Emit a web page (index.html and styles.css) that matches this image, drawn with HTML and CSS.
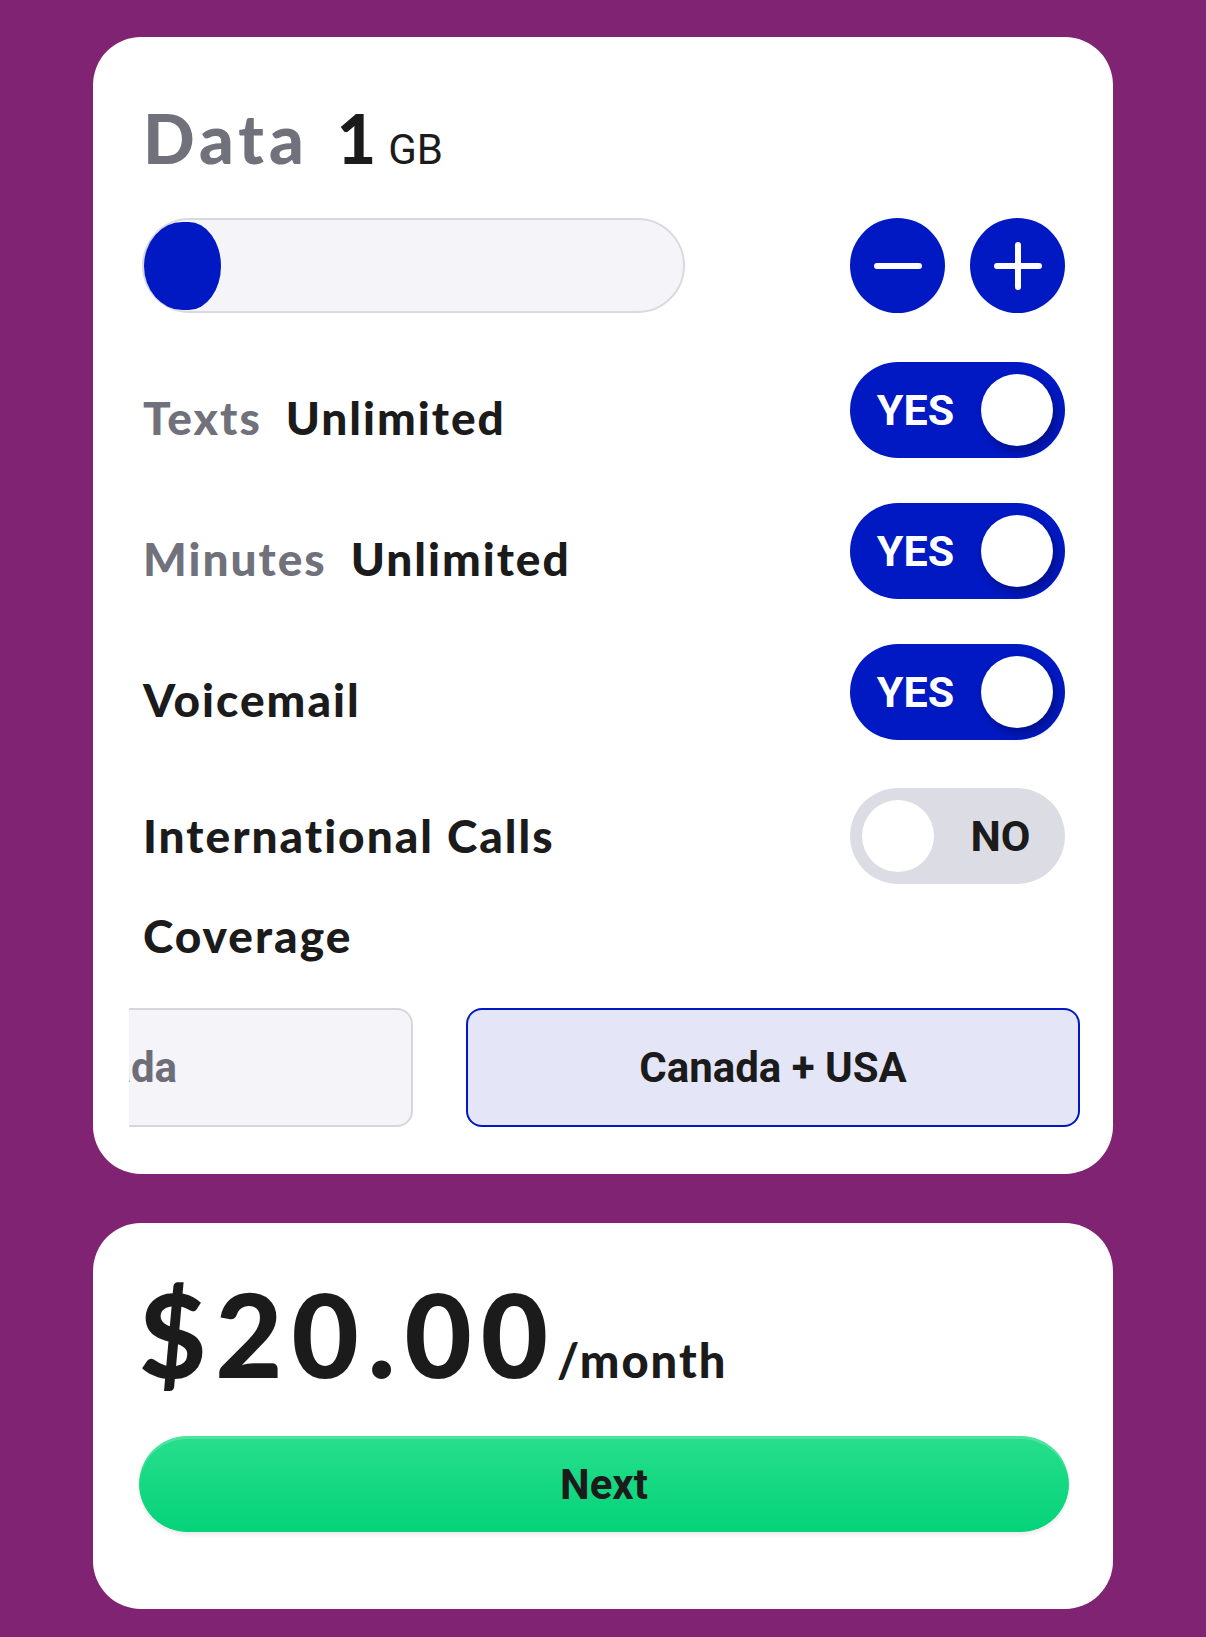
FILE: index.html
```html
<!DOCTYPE html>
<html lang="en">
<head>
    <meta charset="UTF-8">
    <meta name="viewport" content="width=device-width, initial-scale=1.0">
    <title>Build Your Plan</title>
    <link rel="stylesheet" href="styles.css">
</head>
<body>
    <div class="page">
        <section class="card plan-card">
            <h2 class="data-head"><span class="data-label">Data</span><span class="data-value">1</span><span class="data-unit">GB</span></h2>

            <div class="data-row">
                <div class="slider"><div class="slider-thumb"></div></div>
                <div class="stepper">
                    <button class="step-btn" aria-label="Less data">
                        <svg viewBox="0 0 48 48"><path d="M3 24h42"/></svg>
                    </button>
                    <button class="step-btn" aria-label="More data">
                        <svg viewBox="0 0 48 48"><path d="M3 24h42M24 3v42"/></svg>
                    </button>
                </div>
            </div>

            <div class="option-row">
                <div class="option-label"><span class="muted">Texts</span><span class="option-value">Unlimited</span></div>
                <div class="toggle on"><span class="toggle-text">YES</span><span class="toggle-knob"></span></div>
            </div>
            <div class="option-row">
                <div class="option-label"><span class="muted">Minutes</span><span class="option-value">Unlimited</span></div>
                <div class="toggle on"><span class="toggle-text">YES</span><span class="toggle-knob"></span></div>
            </div>
            <div class="option-row">
                <div class="option-label">Voicemail</div>
                <div class="toggle on"><span class="toggle-text">YES</span><span class="toggle-knob"></span></div>
            </div>
            <div class="option-row intl-row">
                <div class="option-label">International Calls</div>
                <div class="toggle off"><span class="toggle-knob"></span><span class="toggle-text">NO</span></div>
            </div>

            <h3 class="section-title">Coverage</h3>
            <div class="coverage">
                <div class="coverage-track">
                    <button class="coverage-opt">Canada</button>
                    <button class="coverage-opt selected">Canada + USA</button>
                </div>
            </div>
        </section>

        <section class="card price-card">
            <div class="price"><span class="price-amount">$20.00</span><span class="price-period">/month</span></div>
            <button class="next-btn">Next</button>
        </section>
    </div>
</body>
</html>
```

FILE: styles.css
```css
body {
    margin: 0;
    background: #7f2372;
    font-family: "Lato", "Noto Sans", sans-serif;
    color: #1b1b1b;
}
.page {
    padding: 37px 0 28px;
}
.card {
    width: 1020px;
    margin: 0 auto;
    background: #fff;
    border-radius: 48px;
    box-sizing: border-box;
}
.plan-card {
    padding: 67px 48px 47px 50px;
}
.price-card {
    margin-top: 49px;
    padding: 53px 44px 77px 46px;
}

/* Data */
.data-head {
    margin: 0;
    font-size: 68px;
    font-weight: 900;
    line-height: 1;
}
.data-label {
    color: #71717c;
    letter-spacing: 5px;
}
.data-value {
    margin-left: 28px;
}
.data-unit {
    margin-left: 12px;
    font-family: Roboto, sans-serif;
    font-weight: 400;
    font-size: 42px;
}
.data-row {
    margin-top: 46px;
    display: flex;
    justify-content: space-between;
    align-items: center;
}
.slider {
    margin-left: -1px;
    width: 543px;
    height: 95px;
    box-sizing: border-box;
    border: 2px solid #d9d9e1;
    border-radius: 48px;
    background: #f4f4f9;
    display: flex;
    align-items: center;
}
.slider-thumb {
    width: 77px;
    height: 88px;
    background: #0019c2;
    border-radius: 50% 42% 42% 50% / 50%;
}
.stepper {
    display: flex;
    gap: 25px;
}
.step-btn {
    width: 95px;
    height: 95px;
    border: none;
    border-radius: 50%;
    background: #0019c2;
    padding: 0;
    display: flex;
    justify-content: center;
    align-items: center;
    cursor: pointer;
}
.step-btn svg {
    width: 48px;
    height: 48px;
    stroke: #fff;
    stroke-width: 6;
    stroke-linecap: round;
    fill: none;
}

/* Options */
.option-row {
    margin-top: 45px;
    display: flex;
    justify-content: space-between;
    align-items: center;
}
.data-row + .option-row {
    margin-top: 49px;
}
.option-label {
    padding-top: 16px;
    font-size: 46px;
    font-weight: 900;
    letter-spacing: 2px;
    line-height: 1;
}
.intl-row {
    margin-top: 48px;
}
.intl-row .option-label {
    padding-top: 0;
}
.muted {
    color: #71717c;
}
.option-value {
    margin-left: 24px;
}
.toggle {
    width: 215px;
    height: 96px;
    box-sizing: border-box;
    padding: 12px;
    border-radius: 48px;
    display: flex;
    align-items: center;
    font-family: Roboto, sans-serif;
    font-weight: 700;
    font-size: 43px;
}
.toggle.on {
    background: #0019c2;
    color: #fff;
}
.toggle.on .toggle-text {
    padding-right: 12px;
}
.toggle.off {
    background: #dcdce5;
    color: #1b1b1b;
}
.toggle.off .toggle-text {
    padding-left: 14px;
}
.toggle-text {
    flex: 1;
    text-align: center;
}
.toggle-knob {
    width: 72px;
    height: 72px;
    border-radius: 50%;
    background: #fff;
}
.toggle.on .toggle-knob {
    box-shadow: 4px 6px 8px rgba(0, 8, 80, 0.45);
}

/* Coverage */
.section-title {
    margin: 29px 0 0;
    font-size: 46px;
    font-weight: 900;
    letter-spacing: 2px;
    line-height: 1;
}
.coverage {
    margin: 49px -16px 0 -14px;
    overflow: hidden;
}
.coverage-track {
    display: flex;
    gap: 53px;
    transform: translateX(-330px);
}
.coverage-opt {
    flex: 0 0 614px;
    height: 119px;
    border-radius: 16px;
    border: 2px solid #d6d6de;
    background: #f4f4f9;
    color: #6e6e78;
    font-family: Roboto, sans-serif;
    font-weight: 700;
    font-size: 42px;
    cursor: pointer;
}
.coverage-opt.selected {
    border-color: #0019c2;
    background: #e4e6f8;
    color: #1b1b1b;
}

/* Price */
.price {
    line-height: 1;
}
.price-amount {
    font-size: 116px;
    font-weight: 900;
    letter-spacing: 9px;
}
.price-period {
    font-size: 47px;
    font-weight: 900;
    letter-spacing: 2px;
}
.next-btn {
    display: block;
    width: 100%;
    height: 96px;
    margin-top: 44px;
    border: none;
    border-radius: 48px;
    background: linear-gradient(#27de8b, #05d379);
    box-shadow: inset 0 3px 0 rgba(255, 255, 255, 0.18), 0 3px 4px rgba(0, 0, 0, 0.08);
    color: #1b1b1b;
    font-family: Roboto, sans-serif;
    font-weight: 700;
    font-size: 42px;
    cursor: pointer;
}
```
